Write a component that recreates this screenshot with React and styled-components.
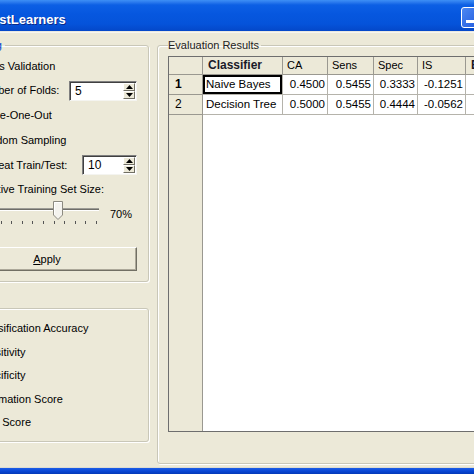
import React from "react";
import styled, { createGlobalStyle } from "styled-components";

const GlobalStyle = createGlobalStyle`
  html, body {
    margin: 0;
    padding: 0;
    background: #ece9d8;
  }
  body {
    font-family: "Liberation Sans", Arial, sans-serif;
    font-size: 11px;
    color: #000;
  }
`;

const columns = [
  { key: "name", label: "Classifier", width: 80, bold: true, align: "left" },
  { key: "ca", label: "CA", width: 45 },
  { key: "sens", label: "Sens", width: 46 },
  { key: "spec", label: "Spec", width: 44 },
  { key: "is", label: "IS", width: 48 },
  { key: "brier", label: "Brier", width: 60, bold: true },
];

const results = [
  { name: "Naive Bayes", ca: "0.4500", sens: "0.5455", spec: "0.3333", is: "-0.1251", brier: "0.6912" },
  { name: "Decision Tree", ca: "0.5000", sens: "0.5455", spec: "0.4444", is: "-0.0562", brier: "0.7780" },
];

const scores = [
  "Classification Accuracy",
  "Sensitivity",
  "Specificity",
  "Information Score",
  "Brier Score",
];

function App() {
  return (
    <>
      <GlobalStyle />
      <Screen>
        <Window>
          <TitleBar>
            <Title>TestLearners</Title>
            <WinButtons>
              <WinButton>
                <MinGlyph />
              </WinButton>
              <WinButton>
                <MaxGlyph />
              </WinButton>
              <WinButton $close>×</WinButton>
            </WinButtons>
          </TitleBar>

          <Body>
            <LeftColumn>
              <GroupBox>
                <GroupTitle>Sampling</GroupTitle>
                <Row $h={24}>
                  <Radio $checked />
                  <Label>Cross Validation</Label>
                </Row>
                <Row $h={25}>
                  <Label $indent={15}>Number of Folds:</Label>
                  <Spin value="5" width={68} />
                </Row>
                <Row $h={25}>
                  <Radio />
                  <Label>Leave-One-Out</Label>
                </Row>
                <Row $h={24}>
                  <Radio />
                  <Label>Random Sampling</Label>
                </Row>
                <Row $h={26}>
                  <Label $indent={18}>Repeat Train/Test:</Label>
                  <Spin value="10" width={55} />
                </Row>
                <Row $h={22}>
                  <Label $indent={15}>Relative Training Set Size:</Label>
                </Row>
                <SliderRow>
                  <Slider />
                  <Percent>70%</Percent>
                </SliderRow>
                <Button>
                  <u>A</u>pply
                </Button>
              </GroupBox>

              <ScoreBox>
                {scores.map((s) => (
                  <Row key={s} $h={23.5}>
                    <Check />
                    <Label>{s}</Label>
                  </Row>
                ))}
              </ScoreBox>
            </LeftColumn>

            <ResultsBox>
              <ResultsTitle>Evaluation Results</ResultsTitle>
              <TableFrame>
                <RowHeader>
                  <Corner />
                  {results.map((r, i) => (
                    <RowNum key={i} $current={i === 0}>
                      {i + 1}
                    </RowNum>
                  ))}
                </RowHeader>
                <DataArea>
                  <HeaderRow>
                    {columns.map((c) => (
                      <HeadCell key={c.key} $w={c.width} $bold={c.bold}>
                        {c.label}
                      </HeadCell>
                    ))}
                  </HeaderRow>
                  {results.map((r, i) => (
                    <DataRow key={i}>
                      {columns.map((c) => (
                        <Cell
                          key={c.key}
                          $w={c.width}
                          $left={c.key === "name"}
                          $current={i === 0 && c.key === "name"}
                        >
                          {r[c.key]}
                        </Cell>
                      ))}
                    </DataRow>
                  ))}
                </DataArea>
              </TableFrame>
            </ResultsBox>
          </Body>
          <BottomFrame />
        </Window>
      </Screen>
    </>
  );
}

function Spin({ value, width }) {
  return (
    <SpinBox $w={width}>
      <SpinValue>{value}</SpinValue>
      <SpinButtons>
        <SpinBtn>
          <svg width="7" height="4" viewBox="0 0 7 4">
            <path d="M3.5 0 L7 4 L0 4 Z" fill="#000" />
          </svg>
        </SpinBtn>
        <SpinBtn>
          <svg width="7" height="4" viewBox="0 0 7 4">
            <path d="M0 0 L7 0 L3.5 4 Z" fill="#000" />
          </svg>
        </SpinBtn>
      </SpinButtons>
    </SpinBox>
  );
}

function Slider() {
  // ticks every ~10.6px, the last one at the end of the track
  const ticks = [];
  for (let k = 0; k < 14; k++) ticks.push(138 - k * 10.6);
  return (
    <SliderSvg width="142" height="28" viewBox="0 0 142 28">
      <rect x="0" y="8" width="141" height="1" fill="#9d9c96" />
      <rect x="0" y="9" width="141" height="1" fill="#6f6e68" />
      <rect x="0" y="10" width="141" height="1" fill="#ffffff" />
      {ticks.map((x) => (
        <rect key={x} x={Math.round(x)} y="21" width="1" height="3" fill="#555" />
      ))}
      <path d="M95.5 1.5 H104.5 V15 L100 19.5 L95.5 15 Z" fill="#f4f3ee" stroke="#8c8a80" />
      <path d="M96.5 2.5 H103.5" stroke="#fff" />
      <path d="M96.5 2.5 V14.5" stroke="#fff" />
    </SliderSvg>
  );
}

export default App;

const Screen = styled.div`
  width: 474px;
  height: 474px;
  overflow: hidden;
`;

const Window = styled.div`
  width: 593px;
  height: 474px;
  margin-left: -60px;
  display: flex;
  flex-direction: column;
  background: #ece9d8;
`;

const TitleBar = styled.div`
  height: 32px;
  flex-shrink: 0;
  display: flex;
  align-items: flex-start;
  justify-content: space-between;
  padding: 0 5px 0 45px;
  box-sizing: border-box;
  background: linear-gradient(
    #3d8ff5 0px,
    #2d7cee 2px,
    #0c5fe4 5px,
    #0657df 14px,
    #0553da 24px,
    #0447c8 31px,
    #e9e8e0 31px
  );
`;

const Title = styled.span`
  margin-top: 12px;
  font-size: 13px;
  font-weight: bold;
  line-height: 15px;
  color: #fff;
  text-shadow: 1px 1px 0 #0a2a8a;
`;

const WinButtons = styled.div`
  display: flex;
  gap: 2px;
  margin-top: 7px;
`;

const WinButton = styled.div`
  width: 21px;
  height: 21px;
  box-sizing: border-box;
  border: 1px solid #fff;
  border-radius: 3px;
  position: relative;
  background: ${({ $close }) =>
    $close
      ? "linear-gradient(135deg, #e97a5a, #c83c1e)"
      : "linear-gradient(135deg, #4c88f3, #1e58dc)"};
  color: #fff;
  font-size: 16px;
  font-weight: bold;
  line-height: 18px;
  text-align: center;
`;

const MinGlyph = styled.span`
  position: absolute;
  left: 4px;
  top: 12px;
  width: 8px;
  height: 3px;
  background: #fff;
`;

const MaxGlyph = styled.span`
  position: absolute;
  left: 4px;
  top: 4px;
  width: 9px;
  height: 9px;
  box-sizing: border-box;
  border: 1px solid #fff;
  border-top-width: 3px;
`;

const Body = styled.div`
  flex: 1;
  display: flex;
  gap: 8px;
  padding: 6px 8px 3px 8px;
  border-top: 1px solid #f7f6f0;
  min-height: 0;
`;

const LeftColumn = styled.div`
  width: 201px;
  flex-shrink: 0;
  display: flex;
  flex-direction: column;
`;

const GroupBox = styled.fieldset`
  margin: 0;
  padding: 2px 11px 10px 11px;
  border: 1px solid #c9c7b8;
  border-radius: 3px;
  box-shadow: inset 1px 1px 0 #fff, 1px 1px 0 #fff;
  display: flex;
  flex-direction: column;
  min-width: 0;
`;

const GroupTitle = styled.legend`
  padding: 0 3px 0 2px;
  margin-left: -6px;
  color: #0046d5;
  font-size: 11px;
  line-height: 13px;
`;

const Row = styled.div`
  height: ${({ $h }) => $h}px;
  display: flex;
  align-items: center;
  gap: 7px;
  flex-shrink: 0;
`;

const Label = styled.span`
  white-space: nowrap;
  line-height: 13px;
  margin-left: ${({ $indent }) => $indent || 0}px;
  margin-right: auto;
`;

const Radio = styled.span`
  width: 13px;
  height: 13px;
  box-sizing: border-box;
  border-radius: 50%;
  border: 1px solid #1c5180;
  margin-right: -4px;
  background: ${({ $checked }) =>
    $checked
      ? "radial-gradient(circle, #3fb43f 0 2.5px, #fff 3px)"
      : "linear-gradient(135deg, #dcdcd7, #fff)"};
  flex-shrink: 0;
`;

const Check = styled.span`
  width: 13px;
  height: 13px;
  box-sizing: border-box;
  border: 1px solid #1c5180;
  margin-right: -4px;
  background: #fff;
  flex-shrink: 0;
  position: relative;
  &::after {
    content: "";
    position: absolute;
    left: 3px;
    top: 0px;
    width: 3px;
    height: 7px;
    border: solid #21a121;
    border-width: 0 2px 2px 0;
    transform: rotate(40deg);
  }
`;

const SpinBox = styled.div`
  width: ${({ $w }) => $w}px;
  flex-shrink: 0;
  height: 20px;
  box-sizing: border-box;
  display: flex;
  background: #fff;
  border: 1px solid;
  border-color: #7f7f7f #f4f4f0 #f4f4f0 #7f7f7f;
  box-shadow: inset 1px 1px 0 #404040;
`;

const SpinValue = styled.span`
  flex: 1;
  padding-left: 5px;
  line-height: 18px;
  font-size: 12px;
`;

const SpinButtons = styled.div`
  width: 12px;
  display: flex;
  flex-direction: column;
  margin: 1px 1px 1px 0;
`;

const SpinBtn = styled.div`
  flex: 1;
  display: flex;
  align-items: center;
  justify-content: center;
  background: #ece9d8;
  border: 1px solid;
  border-color: #fff #716f64 #716f64 #fff;
`;

const SliderRow = styled.div`
  height: 28px;
  display: flex;
  align-items: center;
  gap: 10px;
  margin-left: -2px;
`;

const SliderSvg = styled.svg`
  display: block;
  flex-shrink: 0;
`;

const Percent = styled.span`
  line-height: 13px;
`;

const Button = styled.button`
  margin: 19px 0 0 -3px;
  height: 24px;
  box-sizing: border-box;
  background: #ece9d8;
  border: 1px solid;
  border-color: #fff #716f64 #716f64 #fff;
  box-shadow: inset -1px -1px 0 #aca899;
  font-family: "Liberation Sans", Arial, sans-serif;
  font-size: 11px;
  color: #000;
  padding: 0;
`;

const ScoreBox = styled.div`
  margin-top: 26px;
  padding: 8px 11px 6px 11px;
  border: 1px solid #c9c7b8;
  border-radius: 3px;
  box-shadow: inset 1px 1px 0 #fff, 1px 1px 0 #fff;
  display: flex;
  flex-direction: column;
`;

const ResultsBox = styled.fieldset`
  flex: 1;
  margin: 0;
  padding: 4px 10px 31px 10px;
  border: 1px solid #c9c7b8;
  border-radius: 3px;
  box-shadow: inset 1px 1px 0 #fff, 1px 1px 0 #fff;
  display: flex;
  flex-direction: column;
  min-width: 0;
`;

const ResultsTitle = styled.legend`
  padding: 0 2px 0 0;
  color: #222;
  font-size: 11px;
  line-height: 13px;
`;

const TableFrame = styled.div`
  flex: 1;
  display: flex;
  border: 1px solid #6e6e6e;
  box-shadow: inset 1px 0 0 #a0a0a0;
  background: #fff;
  overflow: hidden;
`;

const RowHeader = styled.div`
  width: 33px;
  flex-shrink: 0;
  background: #ece9d8;
  border-right: 1px solid #9a9890;
  display: flex;
  flex-direction: column;
`;

const Corner = styled.div`
  height: 18px;
  box-sizing: border-box;
  border-bottom: 1px solid #9a9890;
`;

const RowNum = styled.div`
  height: 20px;
  box-sizing: border-box;
  border-bottom: 1px solid #9a9890;
  padding-left: 6px;
  line-height: 19px;
  font-weight: ${({ $current }) => ($current ? "bold" : "normal")};
  font-size: 12px;
`;

const DataArea = styled.div`
  flex: 1;
  display: flex;
  flex-direction: column;
`;

const HeaderRow = styled.div`
  height: 18px;
  display: flex;
  background: #ece9d8;
  border-bottom: 1px solid #9a9890;
  box-sizing: border-box;
`;

const HeadCell = styled.div`
  width: ${({ $w }) => $w}px;
  flex-shrink: 0;
  box-sizing: border-box;
  border-right: 1px solid #9a9890;
  padding-left: ${({ $bold }) => ($bold ? "5px" : "4px")};
  line-height: 17px;
  white-space: nowrap;
  overflow: hidden;
  font-weight: ${({ $bold }) => ($bold ? "bold" : "normal")};
  font-size: ${({ $bold }) => ($bold ? "12px" : "11px")};
  color: ${({ $bold }) => ($bold ? "#1a1a2a" : "#000")};
`;

const DataRow = styled.div`
  height: 20px;
  display: flex;
`;

const Cell = styled.div`
  width: ${({ $w }) => $w}px;
  flex-shrink: 0;
  box-sizing: border-box;
  border-right: 1px solid #b5b3ab;
  border-bottom: 1px solid #b5b3ab;
  padding: 0 2px 0 3px;
  line-height: 19px;
  white-space: nowrap;
  overflow: hidden;
  text-align: ${({ $left }) => ($left ? "left" : "right")};
  box-shadow: ${({ $current }) => ($current ? "inset 0 0 0 2px #000" : "none")};
  font-size: 11.5px;
`;

const BottomFrame = styled.div`
  height: 7px;
  flex-shrink: 0;
  background: linear-gradient(#dcdbd2 0, #dcdbd2 1px, #1d5ee6 1px, #0846d6 4px, #0339b8 7px);
`;
